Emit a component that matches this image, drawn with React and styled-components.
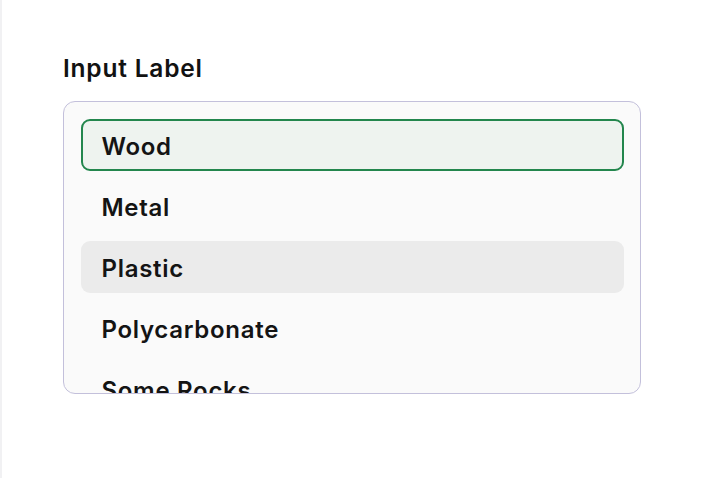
import React from "react";
import styled, { createGlobalStyle } from "styled-components";

const Global = createGlobalStyle`
  html, body { margin: 0; padding: 0; background: #ffffff; }
  body { font-family: Inter, "Noto Sans", sans-serif; color: #111111; }
`;

const Page = styled.div`
  box-sizing: border-box;
  width: 720px;
  height: 478px;
  border-left: 2px solid #f1f1f3;
  padding: 51px 0 0 61px;
`;

const Label = styled.div`
  font-size: 24.5px;
  font-weight: 600;
  line-height: 34px;
  letter-spacing: 0.8px;
  color: #121212;
  margin-bottom: 16px;
`;

const ListBox = styled.div`
  box-sizing: border-box;
  width: 578px;
  height: 293px;
  border: 1.5px solid #c3c0db;
  border-radius: 12px;
  background: #fafafa;
  overflow: hidden;
  padding: 16.5px 16.5px 0 16.5px;
  display: flex;
  flex-direction: column;
  gap: 9px;
`;

const Option = styled.div`
  box-sizing: border-box;
  flex: 0 0 52px;
  display: flex;
  align-items: center;
  padding: 3px 0 0 19px;
  border-radius: 9px;
  font-size: 24px;
  font-weight: 600;
  letter-spacing: 0.7px;
  color: #141414;
  background: ${(p) => (p.$selected ? "#eef3ef" : p.$hover ? "#ebebeb" : "transparent")};
  border: 2.5px solid ${(p) => (p.$selected ? "#23864d" : "transparent")};
`;

const items = ["Wood", "Metal", "Plastic", "Polycarbonate", "Some Rocks"];

export default function App() {
  return (
    <>
      <Global />
      <Page>
        <Label>Input Label</Label>
        <ListBox>
          {items.map((it, i) => (
            <Option key={it} $selected={i === 0} $hover={i === 2}>
              {it}
            </Option>
          ))}
        </ListBox>
      </Page>
    </>
  );
}
